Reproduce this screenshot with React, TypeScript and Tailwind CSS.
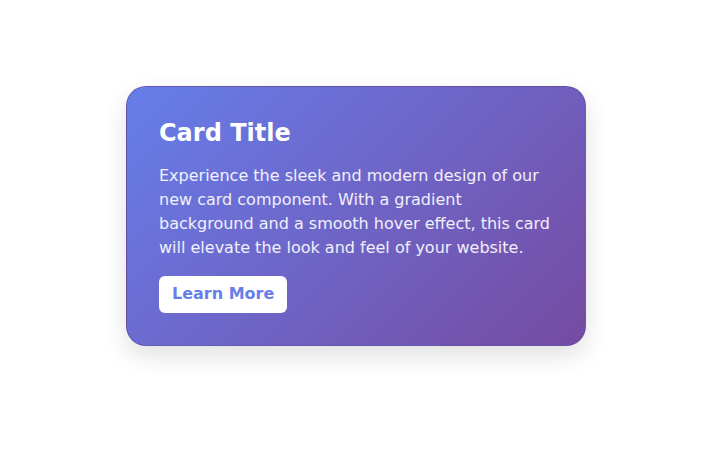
import React from 'react';

export default function App() {
  return (
    <div className="min-h-screen bg-white pl-[126px] pt-[86px] font-['DejaVu_Sans',sans-serif]">
      <div className="w-[460px] rounded-[20px] border border-[#5b4a9a]/60 bg-[linear-gradient(135deg,#667eea_0%,#764ba2_100%)] p-8 text-white shadow-[0_10px_25px_rgba(0,0,0,0.12)]">
        <h2 className="text-2xl leading-[1.2] font-bold">Card Title</h2>
        <p className="mt-4 text-base leading-6 text-white/90">
          Experience the sleek and modern design of our new card component. With a gradient
          background and a smooth hover effect, this card will elevate the look and feel of your
          website.
        </p>
        <button className="mt-4 h-[37px] rounded-md bg-white px-[13px] text-base font-bold text-[#667eea]">
          Learn More
        </button>
      </div>
    </div>
  );
}
